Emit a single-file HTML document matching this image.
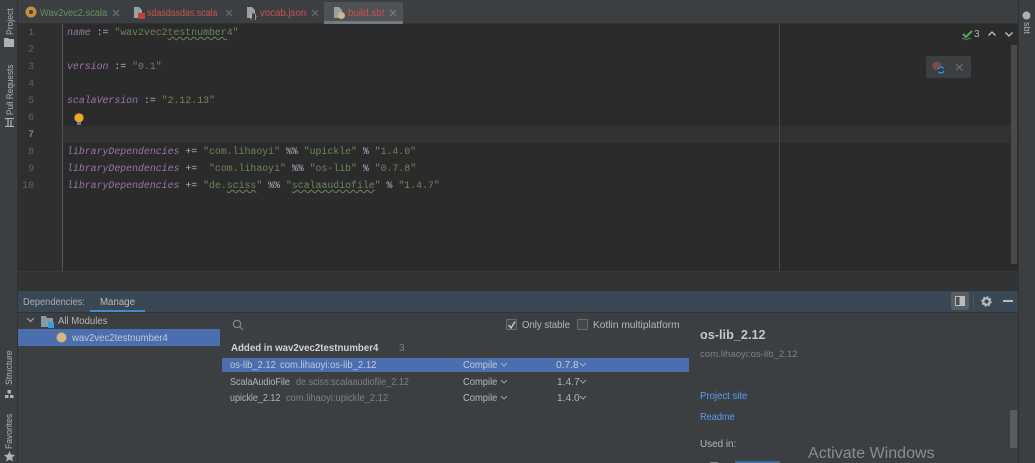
<!DOCTYPE html>
<html><head><meta charset="utf-8">
<style>
html,body{margin:0;padding:0;background:#3c3f41;}
#r{position:relative;width:1035px;height:463px;overflow:hidden;background:#3c3f41;font-family:"Liberation Sans",sans-serif;font-size:10px;color:#bbb;}
.a{position:absolute;}
.t{position:absolute;white-space:nowrap;line-height:14px;transform-origin:0 50%;font-size:10.2px;}
.m{position:absolute;left:67px;white-space:pre;font-family:"Liberation Mono",monospace;font-size:9.87px;line-height:14px;color:#a9b7c6;}
.m i{color:#9876aa;font-style:italic;}
.m b{color:#6a8759;font-weight:normal;}
.w{text-decoration:underline wavy #6a8759;text-decoration-thickness:1px;}
.n{position:absolute;width:26px;text-align:right;left:8px;font-family:"Liberation Mono",monospace;font-size:9.87px;line-height:14px;color:#606366;}
.v{position:absolute;white-space:nowrap;transform-origin:0 0;font-size:9.5px;line-height:12px;color:#afb1b3;}
.g{color:#808080;}
.tab{color:#c75450;font-size:10.3px;}
.p{color:#b4b6b8;}
.s{color:#c4cad6;}
.d{color:#808080;}
</style></head><body><div id="r">

<!-- tab bar -->
<div class="a" style="left:18px;top:23px;width:1000px;height:1px;background:#323232;"></div>
<div class="a" style="left:324px;top:2px;width:79px;height:20px;background:#4e5254;"></div>
<div class="a" style="left:324px;top:21px;width:79px;height:3px;background:#747a80;"></div>

<svg class="a" style="left:25px;top:6px" width="12" height="12"><circle cx="6" cy="6" r="5.500" fill="#c09040"/><circle cx="6" cy="6" r="2" fill="#4a4538"/></svg>
<div class="t tab" style="left:40px;top:7px;color:#6a8f5a;transform:scaleX(.9)">Wav2vec2.scala</div>
<svg class="a" style="left:112px;top:9px" width="8" height="8"><path d="M1 1l6 6M7 1L1 7" stroke="#6e7274" stroke-width="1.100"/></svg>

<svg class="a" style="left:133px;top:7px" width="14" height="13"><path d="M1 0h5l3 3v3H6v5H1z" fill="#9aa0a4"/><rect x="5" y="6" width="7" height="6" fill="#c04040"/></svg>
<div class="t tab" style="left:147px;top:7px;transform:scaleX(.86)">sdasdasdas.scala</div>
<svg class="a" style="left:225px;top:9px" width="8" height="8"><path d="M1 1l6 6M7 1L1 7" stroke="#6e7274" stroke-width="1.100"/></svg>

<svg class="a" style="left:246px;top:7px" width="13" height="13"><path d="M1 0h5l3 3v3H6v5H1z" fill="#9aa0a4"/><text x="3" y="12" font-size="7" fill="#ccc" font-family="Liberation Mono">{}</text></svg>
<div class="t tab" style="left:260px;top:7px;transform:scaleX(.94)">vocab.json</div>
<svg class="a" style="left:311px;top:9px" width="8" height="8"><path d="M1 1l6 6M7 1L1 7" stroke="#6e7274" stroke-width="1.100"/></svg>

<svg class="a" style="left:333px;top:7px" width="13" height="13"><path d="M1 0h5l3 3v3H6v5H1z" fill="#9aa0a4"/><circle cx="8.500" cy="8.500" r="3.500" fill="#d9b382"/></svg>
<div class="t tab" style="left:348px;top:7px;transform:scaleX(.95)">build.sbt</div>
<svg class="a" style="left:389px;top:9px" width="8" height="8"><path d="M1 1l6 6M7 1L1 7" stroke="#7c8082" stroke-width="1.100"/></svg>

<!-- editor -->
<div class="a" style="left:18px;top:24px;width:1000px;height:247px;background:#2b2b2b;"></div>
<div class="a" style="left:18px;top:24px;width:44px;height:247px;background:#2f2f2f;"></div>
<div class="a" style="left:62px;top:24px;width:1px;height:247px;background:#555;"></div>
<div class="a" style="left:63px;top:126px;width:955px;height:17px;background:#323232;"></div>
<div class="a" style="left:779px;top:24px;width:1px;height:247px;background:#4a4a4a;"></div>
<div class="a" style="left:1011px;top:45px;width:6px;height:219px;background:#4a4a4a;"></div>

<div class="n" style="top:26px">1</div>
<div class="n" style="top:43px">2</div>
<div class="n" style="top:60px">3</div>
<div class="n" style="top:77px">4</div>
<div class="n" style="top:94px">5</div>
<div class="n" style="top:111px">6</div>
<div class="n" style="top:128px;color:#a4a3a3">7</div>
<div class="n" style="top:145px">8</div>
<div class="n" style="top:162px">9</div>
<div class="n" style="top:179px">10</div>

<div class="m" style="top:26px"><i>name</i> := <b>"wav2vec2<span class="w">testnumber</span>4"</b></div>
<div class="m" style="top:60px"><i>version</i> := <b>"0.1"</b></div>
<div class="m" style="top:94px"><i>scalaVersion</i> := <b>"2.12.13"</b></div>
<div class="m" style="top:145px"><i>libraryDependencies</i> += <b>"com.lihaoyi"</b> %% <b>"upickle"</b> % <b>"1.4.0"</b></div>
<div class="m" style="top:162px"><i>libraryDependencies</i> +=  <b>"com.lihaoyi"</b> %% <b>"os-lib"</b> % <b>"0.7.8"</b></div>
<div class="m" style="top:179px"><i>libraryDependencies</i> += <b>"de.<span class="w">sciss</span>"</b> %% <b>"<span class="w">scalaaudiofile</span>"</b> % <b>"1.4.7"</b></div>

<svg class="a" style="left:74px;top:113px" width="10" height="13"><circle cx="5" cy="4.800" r="4.600" fill="#f0a732"/><rect x="3" y="9" width="4" height="3" fill="#7a7a7a"/></svg>

<!-- inspection widget -->
<svg class="a" style="left:961px;top:29px" width="12" height="12"><path d="M2 5l3 3 6-6" stroke="#5aa65a" stroke-width="2" fill="none"/><path d="M1 10q1.500-1.500 3 0t3 0 3 0" stroke="#5a8a5a" fill="none"/></svg>
<div class="t" style="left:974px;top:28px;color:#afb1b3;font-size:10px;">3</div>
<svg class="a" style="left:987px;top:29px" width="10" height="10"><path d="M1.500 6.500L5 3l3.500 3.500" stroke="#c4c6c8" stroke-width="1.300" fill="none"/></svg>
<svg class="a" style="left:1004px;top:29px" width="10" height="10"><path d="M1.500 3.500L5 7l3.500-3.500" stroke="#c4c6c8" stroke-width="1.300" fill="none"/></svg>

<!-- sync popup -->
<div class="a" style="left:926px;top:56px;width:45px;height:22px;background:#3c3f41;border-radius:2px;"></div>
<svg class="a" style="left:931px;top:60px" width="16" height="15"><circle cx="6" cy="6" r="4.500" fill="#7a4a44"/><circle cx="10" cy="10" r="4" fill="#2f3a44"/><path d="M7 9.500a3 3 0 0 1 5.500-1M13 10.500a3 3 0 0 1-5.500 1" stroke="#3d9be0" stroke-width="1.200" fill="none"/></svg>
<svg class="a" style="left:955px;top:63px" width="9" height="9"><path d="M1 1l6.500 6.500M7.500 1L1 7.500" stroke="#6e7274" stroke-width="1.100"/></svg>

<!-- gap -->
<div class="a" style="left:18px;top:271px;width:1000px;height:20px;background:#313335;"></div>
<div class="a" style="left:18px;top:271px;width:1000px;height:1px;background:#3a3a3a;"></div>

<!-- panel header -->
<div class="a" style="left:18px;top:291px;width:1000px;height:21px;background:#3a4856;"></div>
<div class="a" style="left:18px;top:312px;width:1000px;height:1px;background:#323232;"></div>
<div class="t" style="left:23px;top:296px;color:#a9adb0;transform:scaleX(.91)">Dependencies:</div>
<div class="t" style="left:100px;top:296px;color:#bbbbbb;transform:scaleX(.95)">Manage</div>
<div class="a" style="left:90px;top:310px;width:55px;height:2px;background:#4a88c7;"></div>

<div class="a" style="left:951px;top:292px;width:18px;height:18px;background:#5a5e61;border-radius:2px;"></div>
<svg class="a" style="left:955px;top:296px" width="10" height="10"><rect width="10" height="10" fill="#b9bcbe"/><rect x="1" y="1" width="3.500" height="8" fill="#4c5052"/></svg>
<div class="a" style="left:973px;top:293px;width:1px;height:16px;background:#4a5560;"></div>
<svg class="a" style="left:981px;top:296px" width="11" height="11"><circle cx="5.500" cy="5.500" r="3.200" fill="none" stroke="#b9bcbe" stroke-width="2.200"/><circle cx="5.500" cy="5.500" r="4.600" fill="none" stroke="#b9bcbe" stroke-width="1.400" stroke-dasharray="1.800 1.800"/></svg>
<div class="a" style="left:1003px;top:300px;width:10px;height:2px;background:#b9bcbe;"></div>

<!-- tree -->
<svg class="a" style="left:26px;top:317px" width="9" height="7"><path d="M1 1l3.500 3.500L8 1" stroke="#a0a3a5" stroke-width="1.200" fill="none"/></svg>
<svg class="a" style="left:41px;top:315px" width="14" height="13"><path d="M0 1h5l1 2h6v4H7v5H0z" fill="#8a9aa5"/><rect x="7" y="7" width="6" height="6" fill="#3d9be0"/></svg>
<div class="t p" style="left:58px;top:315px;transform:scaleX(.94)">All Modules</div>
<div class="a" style="left:18px;top:329px;width:202px;height:17px;background:#4b6eaf;"></div>
<svg class="a" style="left:56px;top:332px" width="11" height="11"><circle cx="5.500" cy="5.500" r="5" fill="#d9b382"/></svg>
<div class="t s" style="left:72px;top:332px;transform:scaleX(.94)">wav2vec2testnumber4</div>

<!-- search + filters -->
<svg class="a" style="left:232px;top:319px" width="12" height="12"><circle cx="5" cy="5" r="3.700" fill="none" stroke="#8a8d8f" stroke-width="1.100"/><path d="M8 8l3 3" stroke="#8a8d8f" stroke-width="1.200"/></svg>
<div class="a" style="left:506px;top:319px;width:9px;height:9px;border:1px solid #6b6b6b;background:#43494a;border-radius:1px;"></div>
<svg class="a" style="left:507px;top:320px" width="10" height="10"><path d="M1.500 5l2.500 3 4-6.500" stroke="#c8cacc" stroke-width="1.400" fill="none"/></svg>
<div class="t p" style="left:522px;top:319px;transform:scaleX(.94)">Only stable</div>
<div class="a" style="left:577px;top:319px;width:9px;height:9px;border:1px solid #6b6b6b;background:#43494a;border-radius:1px;"></div>
<div class="t p" style="left:593px;top:319px;">Kotlin multiplatform</div>

<!-- list -->
<div class="t" style="left:231px;top:342px;color:#cfd1d3;font-weight:bold;transform:scaleX(.95)">Added in wav2vec2testnumber4</div>
<div class="t d" style="left:399px;top:342px;font-size:10px;">3</div>

<div class="a" style="left:222px;top:358px;width:467px;height:14px;background:#4b6eaf;"></div>
<div class="t s" style="left:230px;top:359px;transform:scaleX(.92)">os-lib_2.12</div>
<div class="t s" style="left:280px;top:359px;transform:scaleX(.93)">com.lihaoyi:os-lib_2.12</div>
<div class="t s" style="left:463px;top:359px;transform:scaleX(.92)">Compile</div>
<div class="t s" style="left:556px;top:359px;">0.7.8</div>

<div class="t p" style="left:230px;top:376px;transform:scaleX(.88)">ScalaAudioFile</div>
<div class="t d" style="left:296px;top:376px;transform:scaleX(.89)">de.sciss:scalaaudiofile_2.12</div>
<div class="t p" style="left:463px;top:376px;transform:scaleX(.92)">Compile</div>
<div class="t p" style="left:557px;top:376px;">1.4.7</div>

<div class="t p" style="left:230px;top:392px;transform:scaleX(.88)">upickle_2.12</div>
<div class="t d" style="left:286px;top:392px;transform:scaleX(.92)">com.lihaoyi:upickle_2.12</div>
<div class="t p" style="left:463px;top:392px;transform:scaleX(.92)">Compile</div>
<div class="t p" style="left:557px;top:392px;">1.4.0</div>

<svg class="a" style="left:500px;top:362px" width="8" height="6"><path d="M1 1l3 3 3-3" stroke="#9fb0cf" fill="none"/></svg>
<svg class="a" style="left:579px;top:362px" width="8" height="6"><path d="M1 1l3 3 3-3" stroke="#9fb0cf" fill="none"/></svg>
<svg class="a" style="left:500px;top:379px" width="8" height="6"><path d="M1 1l3 3 3-3" stroke="#a0a3a5" fill="none"/></svg>
<svg class="a" style="left:579px;top:379px" width="8" height="6"><path d="M1 1l3 3 3-3" stroke="#a0a3a5" fill="none"/></svg>
<svg class="a" style="left:500px;top:395px" width="8" height="6"><path d="M1 1l3 3 3-3" stroke="#a0a3a5" fill="none"/></svg>
<svg class="a" style="left:579px;top:395px" width="8" height="6"><path d="M1 1l3 3 3-3" stroke="#a0a3a5" fill="none"/></svg>

<!-- details -->
<div class="t" style="left:700px;top:328px;color:#c4c6c8;font-size:12.700px;font-weight:bold;">os-lib_2.12</div>
<div class="t d" style="left:700px;top:348px;font-size:9.600px;">com.lihaoyi:os-lib_2.12</div>
<div class="t" style="left:700px;top:390px;color:#589df6;transform:scaleX(.94)">Project site</div>
<div class="t" style="left:700px;top:411px;color:#589df6;transform:scaleX(.9)">Readme</div>
<div class="t p" style="left:700px;top:438px;transform:scaleX(.97)">Used in:</div>
<div class="a" style="left:710px;top:462px;width:8px;height:1px;background:#8a8d8f;"></div>
<div class="a" style="left:735px;top:461px;width:45px;height:2px;background:#3f6a9a;"></div>

<!-- panel scrollbar -->
<div class="a" style="left:1010px;top:410px;width:7px;height:38px;background:#5a5d5f;"></div>
<div class="a" style="left:1018px;top:0;width:1px;height:463px;background:#323232;"></div>

<!-- activate -->
<div class="t" style="left:808px;top:445px;color:#8a8d8f;font-size:15.500px;line-height:18px;transform:scaleX(1.035)">Activate Windows</div>

<!-- left bar -->
<div class="a" style="left:17px;top:0;width:1px;height:463px;background:#323232;"></div>
<div class="v" style="left:5px;top:35px;transform:rotate(-90deg) scaleX(.9);">Project</div>
<svg class="a" style="left:4px;top:38px" width="11" height="9"><path d="M0 0h4l1 1h5v8H0z" fill="#afb1b3"/></svg>
<div class="v" style="left:5px;top:115px;transform:rotate(-90deg) scaleX(.86);">Pull Requests</div>
<svg class="a" style="left:5px;top:118px" width="10" height="9"><path d="M0 .5h9M0 8.500h9M3 1v7M6 2v6" stroke="#afb1b3" stroke-width="1.200" fill="none"/></svg>
<div class="v" style="left:4px;top:385px;transform:rotate(-90deg) scaleX(.9);">Structure</div>
<svg class="a" style="left:5px;top:390px" width="9" height="8"><rect x="0" y="5" width="3.500" height="3" fill="#afb1b3"/><rect x="5" y="5" width="3.500" height="3" fill="#afb1b3"/><rect x="2.500" y="0" width="3.500" height="3.500" fill="#afb1b3"/></svg>
<div class="v" style="left:4px;top:449px;transform:rotate(-90deg) scaleX(.9);">Favorites</div>
<svg class="a" style="left:4px;top:451px" width="11" height="11"><path d="M5.500 0l1.600 3.600 3.900.4-2.900 2.600.8 3.900-3.400-2-3.400 2 .8-3.900L0 4l3.900-.4z" fill="#afb1b3"/></svg>

<!-- right bar -->
<svg class="a" style="left:1022px;top:11px" width="9" height="9"><circle cx="4.500" cy="4.500" r="4" fill="#afb1b3"/></svg>
<div class="v" style="left:1033px;top:22px;transform:rotate(90deg);font-size:9px;">sbt</div>

</div></body></html>
